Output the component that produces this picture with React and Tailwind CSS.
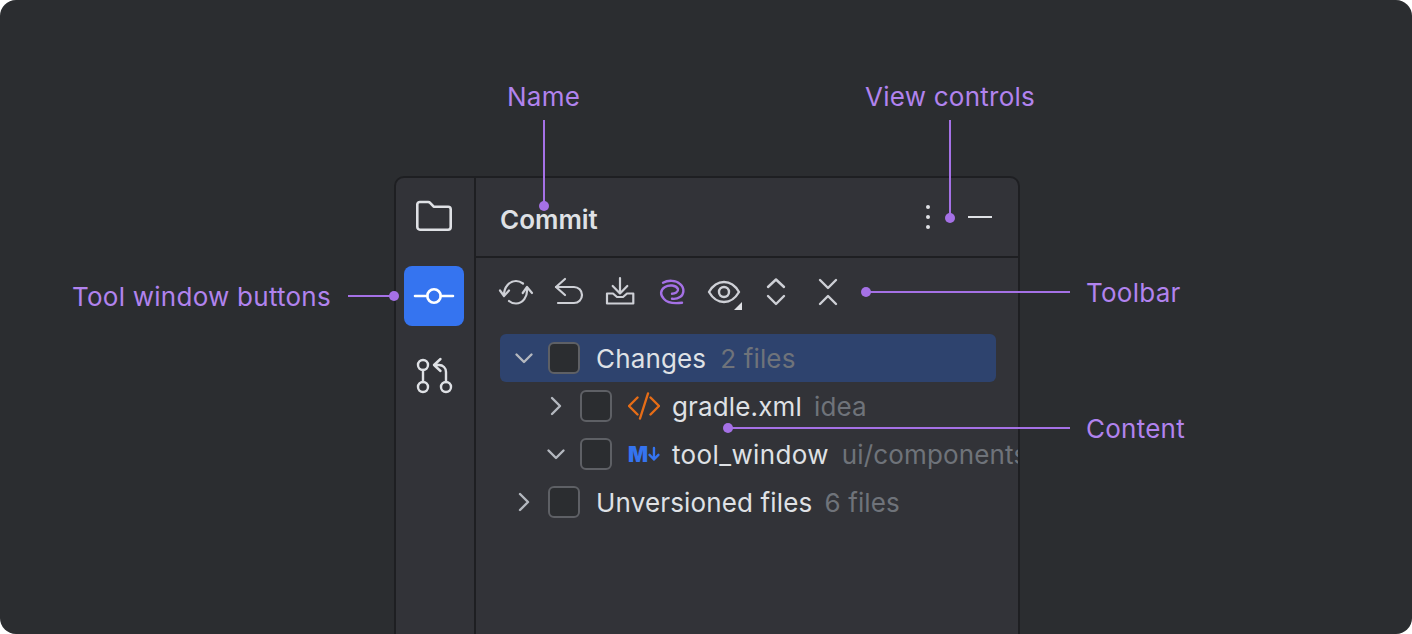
const s = { fill: "none", stroke: "currentColor", strokeWidth: 2.4, strokeLinecap: "round", strokeLinejoin: "round" };

function ToolIcon({ children, className = "" }) {
  return (
    <div className={`relative flex h-9 w-[52px] items-center justify-center ${className}`}>
      {children}
    </div>
  );
}

function Check() {
  return <div className="h-8 w-8 shrink-0 rounded-md border-2 border-[#5e6065] bg-[#2b2d30]" />;
}

function ChevronDown() {
  return (
    <svg width="32" height="32" viewBox="0 0 32 32" className="shrink-0 text-[#b4b8bf]" {...s}>
      <path d="M8.5 12.5 16 20l7.5-7.5" />
    </svg>
  );
}

function ChevronRight() {
  return (
    <svg width="32" height="32" viewBox="0 0 32 32" className="shrink-0 text-[#b4b8bf]" {...s}>
      <path d="M12 8l8 8-8 8" />
    </svg>
  );
}

function Dot({ className }) {
  return <div className={`absolute h-2.5 w-2.5 rounded-full bg-[#a571e6] ${className}`} />;
}

function Label({ className, children }) {
  return <div className={`absolute whitespace-nowrap text-[26px] leading-8 tracking-[0.25px] text-[#b183ee] ${className}`}>{children}</div>;
}

export default function App() {
  return (
    <div className="relative h-[634px] w-[1412px] overflow-hidden rounded-2xl bg-[#2b2d30] pl-[394px] pt-[176px] font-['Inter',sans-serif]">
      <div className="flex h-[480px] w-[626px] overflow-hidden rounded-t-[10px] border-2 border-[#1e1f22] bg-[#323338]">
        <aside className="flex w-[78px] shrink-0 flex-col items-center pr-0.5 pt-2">
          <div className="flex h-[60px] w-[60px] items-center justify-center text-[#dfe1e5]">
            <svg width="40" height="36" viewBox="0 0 40 36" {...s} strokeWidth="2.6">
              <path d="M3.300 6.600c0-1.500 1.200-2.600 2.600-2.600h8.200c.8 0 1.500.3 2 .9l3.600 3.800h14.400c1.500 0 2.600 1.200 2.600 2.600v17.800c0 1.500-1.200 2.600-2.600 2.600H5.900c-1.400 0-2.600-1.200-2.600-2.600z" />
            </svg>
          </div>
          <div className="mt-5 flex h-[60px] w-[60px] items-center justify-center rounded-lg bg-[#3574f0] text-white">
            <svg width="44" height="24" viewBox="0 0 44 24" {...s} strokeWidth="2.6">
              <circle cx="22" cy="12" r="6.700" />
              <path d="M3 12h12.300M28.700 12H41" />
            </svg>
          </div>
          <div className="mt-5 flex h-[60px] w-[60px] items-center justify-center text-[#dfe1e5]">
            <svg width="44" height="44" viewBox="0 0 44 44" {...s}>
              <circle cx="11" cy="11" r="5" />
              <circle cx="11" cy="33" r="5" />
              <circle cx="34" cy="33" r="5" />
              <path d="M11 16v12M34 28V18c0-4-3-7-7-7h-5M28.500 5 22 11l6.500 6" />
            </svg>
          </div>
        </aside>

        <main className="flex min-w-0 flex-1 flex-col border-l-2 border-[#1e1f22]">
          <header className="flex h-[80px] shrink-0 items-center border-b-2 border-[#1e1f22] pl-6 pr-[26px]">
            <h1 className="mt-1 flex-1 text-[26px] font-semibold text-[#dfe1e5]">Commit</h1>
            <div className="mr-[38px] flex flex-col gap-1.5">
              <span className="h-1 w-1 rounded-full bg-[#dfe1e5]" />
              <span className="h-1 w-1 rounded-full bg-[#dfe1e5]" />
              <span className="h-1 w-1 rounded-full bg-[#dfe1e5]" />
            </div>
            <div className="h-0.5 w-6 bg-[#dfe1e5]" />
          </header>

          <div className="flex pl-3.5 pt-4 text-[#ced0d6]">
            <ToolIcon>
              <svg width="36" height="36" viewBox="0 0 36 36" {...s} strokeWidth="2.2">
                <path d="M6 21C6 13 11.500 7 18 7c2.500 0 5 1 7 2.500" />
                <path d="M2 16.500 6 22l5-5.500" />
                <path d="M29 14c1 9-4.500 15.500-11 15.500-2.500 0-5-.7-7-2.500" />
                <path d="M24.700 19 29 13l5 6" />
              </svg>
            </ToolIcon>
            <ToolIcon>
              <svg width="36" height="36" viewBox="0 0 36 36" {...s} strokeWidth="2.2">
                <path d="M15 5l-9 8 9 8" />
                <path d="M6 13h18a8 8 0 0 1 0 16H8" />
              </svg>
            </ToolIcon>
            <ToolIcon>
              <svg width="36" height="36" viewBox="0 0 36 36" {...s} strokeWidth="2.2">
                <path d="M18 4v15.500M10.700 12 18 19.500 25.300 12" />
                <path d="M5 19.500h6l4 3.500h6l4-3.500h6.300v10H5z" />
              </svg>
            </ToolIcon>
            <ToolIcon className="text-[#a571e6]">
              <svg width="36" height="36" viewBox="2 2 36 36" {...s}>
                <path d="M11 10.700C16 8 24 8 28 12c5 4 4 11 0 13-3 2-6 2-8 1.700" />
                <path d="M30 30.700C24 31.500 16 31.500 12 27c-4-4-4-9 1-12 4-2.500 11-2 13 2 .5 3-3 4.700-6 4.700" />
              </svg>
            </ToolIcon>
            <ToolIcon>
              <svg width="36" height="36" viewBox="0 0 36 36" {...s}>
                <path d="M3 18c3.500-6 8.500-10 15-10s11.500 4 15 10c-3.500 6-8.500 10-15 10S6.500 24 3 18z" />
                <circle cx="18" cy="18" r="5" />
              </svg>
              <div className="absolute bottom-0 left-[36px] h-0 w-0 border-b-8 border-l-8 border-b-[#dfe1e5] border-l-transparent" />
            </ToolIcon>
            <ToolIcon>
              <svg width="36" height="36" viewBox="0 0 36 36" {...s}>
                <path d="M10 13l8-7.500 8 7.500M10 22l8 8 8-8" />
              </svg>
            </ToolIcon>
            <ToolIcon>
              <svg width="36" height="36" viewBox="0 0 36 36" {...s}>
                <path d="M10 6l8 8 8-8M10 30l8-8 8 8" />
              </svg>
            </ToolIcon>
          </div>

          <div className="mt-6 flex flex-col whitespace-nowrap pl-6 text-[26px] tracking-[0.15px] text-[#dfe1e5]">
            <div className="flex h-12 w-[496px] items-center gap-2 rounded-md bg-[#2e436e] pl-2">
              <ChevronDown />
              <Check />
              <span className="ml-2">Changes</span>
              <span className="ml-1.5 text-[#6f737a]">2 files</span>
            </div>
            <div className="flex h-12 items-center gap-2 pl-10">
              <ChevronRight />
              <Check />
              <svg width="32" height="32" viewBox="0 0 32 32" className="ml-2 shrink-0 text-[#e66d17]" {...s}>
                <path d="M9.500 7.500 1 16l8.500 8.500M22.500 7.500 31 16l-8.500 8.500M20 3.500 12 28.500" />
              </svg>
              <span className="ml-1">gradle.xml</span>
              <span className="ml-1 text-[#6f737a]">idea</span>
            </div>
            <div className="flex h-12 items-center gap-2 pl-10">
              <ChevronDown />
              <Check />
              <div className="ml-2 flex w-8 shrink-0 items-center text-[#3574f0]">
                <span className="text-[21px] font-black leading-none tracking-normal">M</span>
                <svg width="14" height="16" viewBox="0 0 14 16" {...s} strokeWidth="2.800" className="ml-auto">
                  <path d="M7 1v13.500M1.800 9 7 14.500 12.200 9" />
                </svg>
              </div>
              <span className="ml-1 tracking-[0.36px]">tool_window</span>
              <span className="ml-[5px] text-[#6f737a]">ui/components</span>
            </div>
            <div className="flex h-12 items-center gap-2 pl-2">
              <ChevronRight />
              <Check />
              <span className="ml-2">Unversioned files</span>
              <span className="ml-1 text-[#6f737a]">6 files</span>
            </div>
          </div>
        </main>
      </div>

      <Label className="left-[507px] top-[81px]">Name</Label>
      <div className="absolute left-[543px] top-[120px] h-[86px] w-0.5 bg-[#a571e6]" />
      <Dot className="left-[539px] top-[201px]" />

      <Label className="left-[865px] top-[81px]">View controls</Label>
      <div className="absolute left-[949px] top-[120px] h-[98px] w-0.5 bg-[#a571e6]" />
      <Dot className="left-[945px] top-[213px]" />

      <Label className="left-[72px] top-[281px]">Tool window buttons</Label>
      <div className="absolute left-[348px] top-[295px] h-0.5 w-[46px] bg-[#a571e6]" />
      <Dot className="left-[389px] top-[291px]" />

      <Label className="left-[1086px] top-[277px]">Toolbar</Label>
      <div className="absolute left-[866px] top-[291px] h-0.5 w-[204px] bg-[#a571e6]" />
      <Dot className="left-[861px] top-[287px]" />

      <Label className="left-[1086px] top-[413px]">Content</Label>
      <div className="absolute left-[728px] top-[427px] h-0.5 w-[342px] bg-[#a571e6]" />
      <Dot className="left-[723px] top-[423px]" />
    </div>
  );
}
